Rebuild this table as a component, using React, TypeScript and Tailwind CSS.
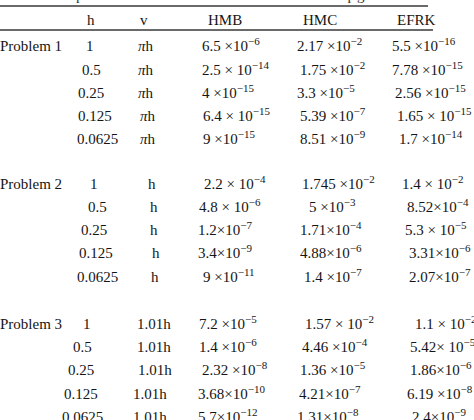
import React from 'react';

type Cell = { text: string; exp?: string; pad: string };
type Row = { label?: string; h: Cell; v: Cell; hmb: Cell; hmc: Cell; efrk: Cell };

const PI_H = 'πh';

const groups: Row[][] = [
  [
    {
      label: 'Problem 1',
      h: { text: '1', pad: 'pl-[24px]' },
      v: { text: PI_H, pad: 'pl-[5px]' },
      hmb: { text: '6.5 ×', exp: '6', pad: 'pl-[4px]' },
      hmc: { text: '2.17 ×', exp: '2', pad: 'pl-0' },
      efrk: { text: '5.5 ×', exp: '16', pad: 'pl-0' },
    },
    {
      h: { text: '0.5', pad: 'pl-[20px]' },
      v: { text: PI_H, pad: 'pl-[5px]' },
      hmb: { text: '2.5 × ', exp: '14', pad: 'pl-[4px]' },
      hmc: { text: '1.75 ×', exp: '2', pad: 'pl-[3px]' },
      efrk: { text: '7.78 ×', exp: '15', pad: 'pl-0' },
    },
    {
      h: { text: '0.25', pad: 'pl-[16px]' },
      v: { text: PI_H, pad: 'pl-[5px]' },
      hmb: { text: '4 ×', exp: '15', pad: 'pl-[4px]' },
      hmc: { text: '3.3 ×', exp: '5', pad: 'pl-0' },
      efrk: { text: '2.56 ×', exp: '15', pad: 'pl-[3px]' },
    },
    {
      h: { text: '0.125', pad: 'pl-[16px]' },
      v: { text: PI_H, pad: 'pl-[7px]' },
      hmb: { text: '6.4 × ', exp: '15', pad: 'pl-[5px]' },
      hmc: { text: '5.39 ×', exp: '7', pad: 'pl-[3px]' },
      efrk: { text: '1.65 × ', exp: '15', pad: 'pl-[5px]' },
    },
    {
      h: { text: '0.0625', pad: 'pl-[15px]' },
      v: { text: PI_H, pad: 'pl-[7px]' },
      hmb: { text: '9 ×', exp: '15', pad: 'pl-[5px]' },
      hmc: { text: '8.51 ×', exp: '9', pad: 'pl-[3px]' },
      efrk: { text: '1.7 ×', exp: '14', pad: 'pl-[7px]' },
    },
  ],
  [
    {
      label: 'Problem 2',
      h: { text: '1', pad: 'pl-[28px]' },
      v: { text: 'h', pad: 'pl-[15px]' },
      hmb: { text: '2.2 × ', exp: '4', pad: 'pl-[6px]' },
      hmc: { text: '1.745 ×', exp: '2', pad: 'pl-[5px]' },
      efrk: { text: '1.4 × ', exp: '2', pad: 'pl-[10px]' },
    },
    {
      h: { text: '0.5', pad: 'pl-[26px]' },
      v: { text: 'h', pad: 'pl-[17px]' },
      hmb: { text: '4.8 × ', exp: '6', pad: 'pl-[1px]' },
      hmc: { text: '5 ×', exp: '3', pad: 'pl-[12px]' },
      efrk: { text: '8.52×', exp: '4', pad: 'pl-[15px]' },
    },
    {
      h: { text: '0.25', pad: 'pl-[19px]' },
      v: { text: 'h', pad: 'pl-[17px]' },
      hmb: { text: '1.2×', exp: '7', pad: 'pl-0' },
      hmc: { text: '1.71×', exp: '4', pad: 'pl-[3px]' },
      efrk: { text: '5.3 × ', exp: '5', pad: 'pl-[13px]' },
    },
    {
      h: { text: '0.125', pad: 'pl-[17px]' },
      v: { text: 'h', pad: 'pl-[19px]' },
      hmb: { text: '3.4×', exp: '9', pad: 'pl-0' },
      hmc: { text: '4.88×', exp: '6', pad: 'pl-[3px]' },
      efrk: { text: '3.31×', exp: '6', pad: 'pl-[17px]' },
    },
    {
      h: { text: '0.0625', pad: 'pl-[15px]' },
      v: { text: 'h', pad: 'pl-[18px]' },
      hmb: { text: '9 ×', exp: '11', pad: 'pl-[5px]' },
      hmc: { text: '1.4 ×', exp: '7', pad: 'pl-[7px]' },
      efrk: { text: '2.07×', exp: '7', pad: 'pl-[17px]' },
    },
  ],
  [
    {
      label: 'Problem 3',
      h: { text: '1', pad: 'pl-[21px]' },
      v: { text: '1.01h', pad: 'pl-[4px]' },
      hmb: { text: '7.2 ×', exp: '5', pad: 'pl-[1px]' },
      hmc: { text: '1.57 × ', exp: '2', pad: 'pl-[8px]' },
      efrk: { text: '1.1 × ', exp: '2', pad: 'pl-[23px]' },
    },
    {
      h: { text: '0.5', pad: 'pl-[11px]' },
      v: { text: '1.01h', pad: 'pl-[4px]' },
      hmb: { text: '1.4 ×', exp: '6', pad: 'pl-[1px]' },
      hmc: { text: '4.46 ×', exp: '4', pad: 'pl-[5px]' },
      efrk: { text: '5.42× ', exp: '5', pad: 'pl-[18px]' },
    },
    {
      h: { text: '0.25', pad: 'pl-[6px]' },
      v: { text: '1.01h', pad: 'pl-[5px]' },
      hmb: { text: '2.32 ×', exp: '8', pad: 'pl-[4px]' },
      hmc: { text: '1.36 ×', exp: '5', pad: 'pl-[3px]' },
      efrk: { text: '1.86×', exp: '6', pad: 'pl-[18px]' },
    },
    {
      h: { text: '0.125', pad: 'pl-[2px]' },
      v: { text: '1.01h', pad: 'pl-0' },
      hmb: { text: '3.68×', exp: '10', pad: 'pl-0' },
      hmc: { text: '4.21×', exp: '7', pad: 'pl-[2px]' },
      efrk: { text: '6.19 ×', exp: '8', pad: 'pl-[15px]' },
    },
    {
      h: { text: '0.0625', pad: 'pl-0' },
      v: { text: '1.01h', pad: 'pl-0' },
      hmb: { text: '5.7×', exp: '12', pad: 'pl-0' },
      hmc: { text: '1.31×', exp: '8', pad: 'pl-0' },
      efrk: { text: '2.4×', exp: '9', pad: 'pl-[20px]' },
    },
  ],
];

// space above each problem block
const groupGap = ['mt-[4px]', 'mt-[21px]', 'mt-[24px]'];

const Value = ({ cell }: { cell: Cell }) => {
  if (cell.text === PI_H) {
    return (
      <span className={cell.pad}>
        <i>π</i>h
      </span>
    );
  }
  return (
    <span className={cell.pad}>
      {cell.text}
      {cell.exp && (
        <>
          10
          <span className="relative -top-[6px] text-[11px]">−{cell.exp}</span>
        </>
      )}
    </span>
  );
};

const TableRow = ({ row }: { row: Row }) => (
  <div className="flex h-[23.25px] items-center whitespace-pre">
    <div className="w-[62px] shrink-0">{row.label}</div>
    <div className="w-[71px] shrink-0">
      <Value cell={row.h} />
    </div>
    <div className="w-[65px] shrink-0">
      <Value cell={row.v} />
    </div>
    <div className="w-[99px] shrink-0">
      <Value cell={row.hmb} />
    </div>
    <div className="w-[95px] shrink-0">
      <Value cell={row.hmc} />
    </div>
    <div className="shrink-0">
      <Value cell={row.efrk} />
    </div>
  </div>
);

export default function App() {
  return (
    <div
      className="w-[474px] h-[420px] overflow-hidden bg-white text-[15px] text-[#151515]"
      style={{ fontFamily: '"Liberation Serif", "Times New Roman", serif' }}
    >
      {/* caption, cut off at the top of the crop */}
      <div className="h-[5px] overflow-hidden">
        <div className="-mt-[13px] leading-[17px] whitespace-pre text-[#333]">
          <span className="ml-[76px]">p</span>
          <span className="ml-[264px]">p</span>
          <span className="ml-[2px]">g</span>
        </div>
      </div>
      <div className="h-[2px] w-[428px] bg-[#6a6a6a]" />
      <div className="flex h-[22px] items-center pt-[4px]">
        <div className="w-[62px]" />
        <div className="w-[71px] pl-[25px]">h</div>
        <div className="w-[65px] pl-[7px]">v</div>
        <div className="w-[99px] pl-[10px]">HMB</div>
        <div className="w-[95px] pl-[6px]">HMC</div>
        <div className="pl-[5px]">EFRK</div>
      </div>
      <div className="h-[2px] w-[433px] bg-[#6a6a6a]" />
      {groups.map((g, i) => (
        <div key={i} className={groupGap[i]}>
          {g.map((row, j) => (
            <TableRow key={j} row={row} />
          ))}
        </div>
      ))}
    </div>
  );
}
